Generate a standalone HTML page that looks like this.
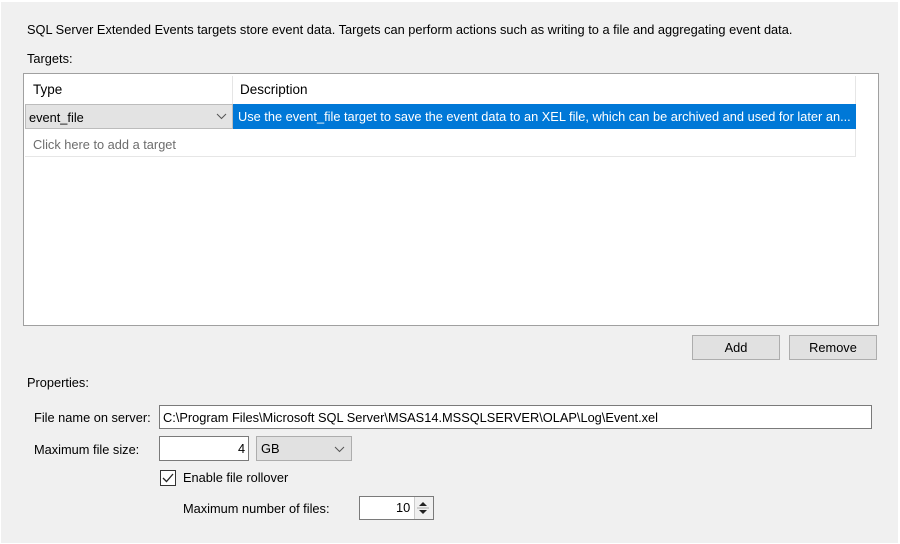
<!DOCTYPE html>
<html><head><style>
*{box-sizing:border-box}
body{margin:0;width:900px;height:544px;background:#fff;font-family:"Liberation Sans",sans-serif;font-size:12.8px;color:#000;position:relative;overflow:hidden}
.bg{position:absolute;left:1px;top:2px;width:897px;height:541px;background:#f0f0f0}
.a{position:absolute;white-space:nowrap}
.box{position:absolute;border:1px solid #7a7a7a;background:#fff}
.btn{position:absolute;border:1px solid #adadad;background:#e1e1e1;text-align:center;line-height:23px}
</style></head><body>
<div class="bg"></div>
<div class="a" style="left:27px;top:22px">SQL Server Extended Events targets store event data. Targets can perform actions such as writing to a file and aggregating event data.</div>
<div class="a" style="left:27px;top:51px">Targets:</div>
<div class="box" style="left:23px;top:73px;width:856px;height:253px;border-color:#a0a0a0"></div>
<div class="a" style="left:25px;top:76px;width:831px;height:81px;border-right:1px solid #e6e6e6;border-bottom:1px solid #e6e6e6"></div>
<div class="a" style="left:232px;top:76px;width:1px;height:28px;background:#e5e5e5"></div>
<div class="a" style="left:33px;top:82px;font-size:13.5px">Type</div>
<div class="a" style="left:240px;top:82px;font-size:13.5px">Description</div>
<div class="a" style="left:25px;top:104px;width:208px;height:25px;background:#e3e3e3;border:1px solid #bcbcbc"></div>
<div class="a" style="left:29px;top:110px">event_file</div>
<svg class="a" style="left:216px;top:113px" width="11" height="7"><path d="M1 1L5.5 5.5L10 1" stroke="#555" fill="none"/></svg>
<div class="a" style="left:233px;top:104px;width:623px;height:25px;background:#0078d7;color:#fff;padding:5px 0 0 5px;overflow:hidden">Use the event_file target to save the event data to an XEL file, which can be archived and used for later an...</div>
<div class="a" style="left:33px;top:137px;color:#6d6d6d">Click here to add a target</div>
<div class="btn" style="left:692px;top:335px;width:88px;height:25px">Add</div>
<div class="btn" style="left:789px;top:335px;width:88px;height:25px">Remove</div>
<div class="a" style="left:27px;top:375px">Properties:</div>
<div class="a" style="left:34px;top:410px">File name on server:</div>
<div class="box" style="left:159px;top:405px;width:713px;height:24px"></div>
<div class="a" style="left:163px;top:410px">C:\Program Files\Microsoft SQL Server\MSAS14.MSSQLSERVER\OLAP\Log\Event.xel</div>
<div class="a" style="left:34px;top:442px">Maximum file size:</div>
<div class="box" style="left:159px;top:436px;width:90px;height:25px"></div>
<div class="a" style="left:238px;top:441px">4</div>
<div class="a" style="left:256px;top:436px;width:96px;height:25px;background:#e1e1e1;border:1px solid #adadad"></div>
<div class="a" style="left:261px;top:441px">GB</div>
<svg class="a" style="left:334px;top:446px" width="11" height="7"><path d="M1 1L5.5 5.5L10 1" stroke="#555" fill="none"/></svg>
<div class="a" style="left:160px;top:470px;width:16px;height:16px;border:1px solid #333;background:#fff"></div>
<svg class="a" style="left:161px;top:471px" width="14" height="14"><path d="M2 7L5.5 10.5L12 3" stroke="#222" stroke-width="1.3" fill="none"/></svg>
<div class="a" style="left:183px;top:470px">Enable file rollover</div>
<div class="a" style="left:183px;top:501px">Maximum number of files:</div>
<div class="box" style="left:359px;top:496px;width:75px;height:24px"></div>
<div class="a" style="left:396px;top:500px">10</div>
<div class="a" style="left:414px;top:497px;width:19px;height:22px;background:#f0f0f0;border-left:1px solid #ccc"></div>
<svg class="a" style="left:416px;top:499px" width="14" height="18"><path d="M3 7L7 3L11 7Z M3 11L7 15L11 11Z" fill="#222"/><path d="M1 9H13" stroke="#aaa"/></svg>
</body></html>
